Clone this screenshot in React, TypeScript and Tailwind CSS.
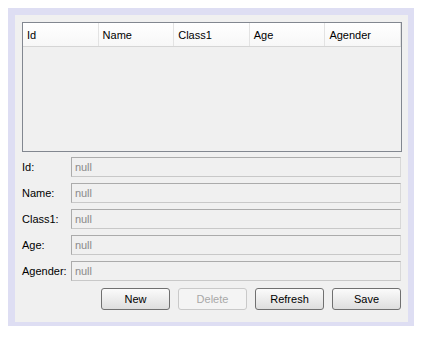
import React from 'react';

const columns = ['Id', 'Name', 'Class1', 'Age', 'Agender'];
const fields = ['Id:', 'Name:', 'Class1:', 'Age:', 'Agender:'];

const Btn: React.FC<{ label: string; disabled?: boolean }> = ({ label, disabled }) => (
  <button
    disabled={disabled}
    className={
      disabled
        ? 'w-[69px] h-[22px] rounded-[3px] border border-[#c9c9c9] bg-[#f4f4f4] text-[#a8a8a8] text-[11px]'
        : 'w-[69px] h-[22px] rounded-[3px] border border-[#707070] bg-gradient-to-b from-[#fbfbfb] to-[#dedede] text-black text-[11px]'
    }
  >
    {label}
  </button>
);

export default function App() {
  return (
    <div
      className="w-[423px] h-[340px] bg-white pt-[8px] pl-[8px]"
      style={{ fontFamily: '"Liberation Sans", Arial, sans-serif' }}
    >
      <div className="w-[406px] h-[318px] border-t-[7px] border-l-[7px] border-r-[6px] border-b-[4px] border-[#dedef3] bg-[#f0f0f0] p-[7px] flex flex-col">
        {/* table */}
        <div className="w-[380px] h-[130px] border border-[#828790] bg-[#f0f0f0] flex flex-col">
          <div className="h-[24px] flex bg-gradient-to-b from-white to-[#f7f7f7] border-b border-[#d5d5d5] text-[11px] text-black">
            {columns.map((c) => (
              <div key={c} className="w-[76px] flex items-center pl-[4px] pt-[2px] border-r border-[#e3e3e3]">
                {c}
              </div>
            ))}
          </div>
        </div>

        {/* form */}
        <div className="mt-[5px] flex flex-col gap-[6px]">
          {fields.map((f) => (
            <div key={f} className="flex items-center h-[20px]">
              <div className="w-[49px] text-[11px] text-black">{f}</div>
              <div className="w-[331px] h-[20px] border border-[#ababab] border-r-[#d8d8d8] border-b-[#c8c8c8] bg-[#f0f0f0] flex items-center pl-[3px] text-[11px] text-[#8a8a8a]">
                null
              </div>
            </div>
          ))}
        </div>

        {/* buttons */}
        <div className="mt-[7px] flex gap-[8px] pl-[79px]">
          <Btn label="New" />
          <Btn label="Delete" disabled />
          <Btn label="Refresh" />
          <Btn label="Save" />
        </div>
      </div>
    </div>
  );
}
